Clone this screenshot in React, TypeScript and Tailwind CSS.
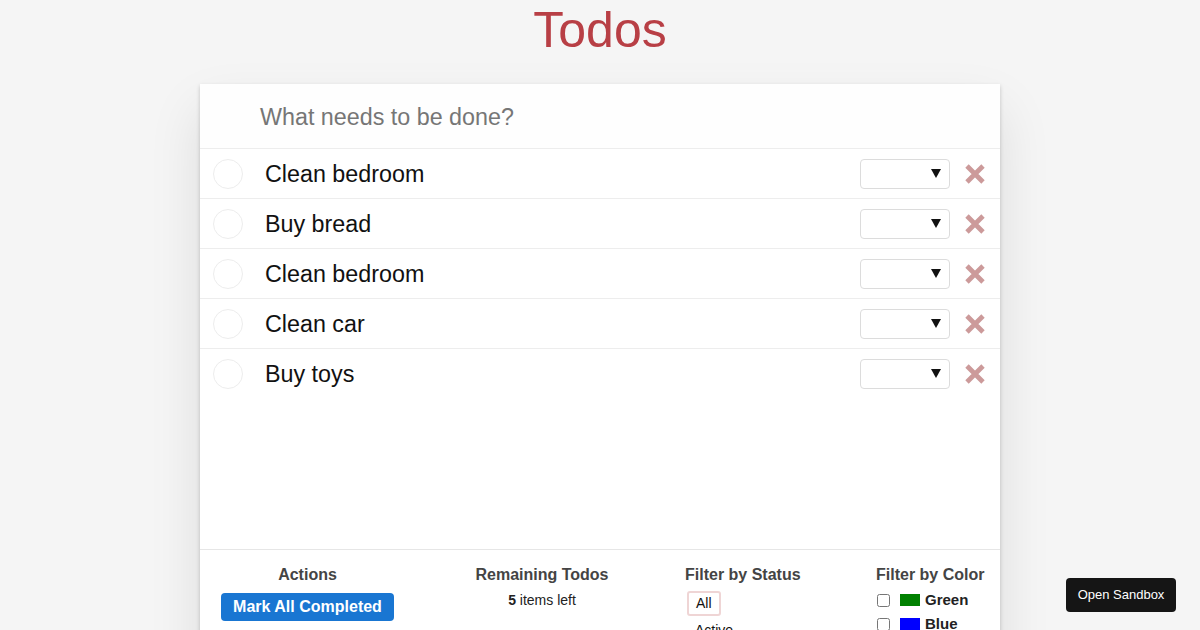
import React from "react";

const todos = ["Clean bedroom", "Buy bread", "Clean bedroom", "Clean car", "Buy toys"];

function XIcon() {
  return (
    <svg width="22" height="22" viewBox="0 0 22 22" className="block">
      <path d="M3 3 L19 19 M19 3 L3 19" stroke="#cc9a9a" strokeWidth="4.8" strokeLinecap="butt" />
    </svg>
  );
}

function TodoRow({ text, last }: { text: string; last: boolean }) {
  return (
    <div className={last ? "flex items-center h-[50px]" : "flex items-center h-[50px] border-b border-[#ededed]"}>
      <div className="ml-[13px] w-[30px] h-[30px] rounded-full border border-[#ededed] shrink-0" />
      <div className="ml-[22px] pt-[2px] text-[23.3px] text-[#111] flex-1 leading-none">{text}</div>
      <div className="relative w-[90px] h-[30px] border border-[#dcdcdc] rounded-[4px] bg-white mr-[14px]">
        <svg width="10" height="9" viewBox="0 0 10 9" className="absolute right-[8px] top-[9px]">
          <path d="M0 0 L10 0 L5 9 Z" fill="#111" />
        </svg>
      </div>
      <div className="mr-[14px]">
        <XIcon />
      </div>
    </div>
  );
}

export default function App() {
  return (
    <div
      className="min-h-[630px] w-full bg-[#f5f5f5] overflow-hidden relative"
      style={{ fontFamily: '"Liberation Sans", Arial, sans-serif' }}
    >
      <div className="h-[84px] flex justify-center">
        <h1 className="text-[50px] leading-[58px] pt-[1px] text-[#b83f45] font-normal">Todos</h1>
      </div>
      <div className="mx-auto w-[800px] bg-white shadow-[0_2px_4px_0_rgba(0,0,0,0.2),0_25px_50px_0_rgba(0,0,0,0.1)]">
        <div className="h-[65px] flex items-center pl-[60px] pt-[3px] border-b border-[#ededed] bg-[rgba(0,0,0,0.004)]">
          <span className="text-[23.3px] text-[#767676] leading-none">What needs to be done?</span>
        </div>
        <div className="h-[401px] border-b border-[#e6e6e6]">
          {todos.map((t, i) => (
            <TodoRow key={i} text={t} last={i === todos.length - 1} />
          ))}
        </div>
        <div className="flex pl-[21px] pt-[15px] h-[120px] text-[#444]">
          <div className="w-[173px] flex flex-col items-center">
            <div className="text-[16px] font-bold leading-[20px]">Actions</div>
            <button className="mt-[8px] h-[28px] w-[173px] bg-[#1976d2] text-white font-bold text-[16px] rounded-[4px] leading-none">
              Mark All Completed
            </button>
          </div>
          <div className="ml-[80px] w-[136px] flex flex-col items-center">
            <div className="text-[16px] font-bold leading-[20px] whitespace-nowrap">Remaining Todos</div>
            <div className="mt-[7px] text-[14px] text-[#222] leading-[16px]">
              <b>5</b> items left
            </div>
          </div>
          <div className="ml-[75px] w-[116px] flex flex-col">
            <div className="text-[16px] font-bold leading-[20px] whitespace-nowrap">Filter by Status</div>
            <div className="mt-[6px] ml-[2px] flex">
              <div className="border-2 border-[rgba(175,47,47,0.2)] rounded-[3px] px-[7px] h-[25px] flex items-center text-[14px] text-[#111]">
                All
              </div>
            </div>
            <div className="mt-[4px] ml-[10px] text-[14px] text-[#111]">Active</div>
          </div>
          <div className="ml-[75px] w-[109px] flex flex-col">
            <div className="text-[16px] font-bold leading-[20px] whitespace-nowrap">Filter by Color</div>
            <div className="mt-[6px] flex items-center h-[18px]">
              <input type="checkbox" className="ml-[1px] w-[13px] h-[13px]" />
              <span className="ml-[10px] w-[20px] h-[12px] bg-[#008000]" />
              <span className="ml-[5px] text-[15px] font-bold text-[#222]">Green</span>
            </div>
            <div className="mt-[6px] flex items-center h-[18px]">
              <input type="checkbox" className="ml-[1px] w-[13px] h-[13px]" />
              <span className="ml-[10px] w-[20px] h-[12px] bg-[#0000ff]" />
              <span className="ml-[5px] text-[15px] font-bold text-[#222]">Blue</span>
            </div>
          </div>
        </div>
      </div>
      <div className="absolute left-[1066px] top-[578px] w-[110px] h-[34px] bg-[#151515] rounded-[4px] flex items-center justify-center text-white text-[13px]">
        Open Sandbox
      </div>
    </div>
  );
}
